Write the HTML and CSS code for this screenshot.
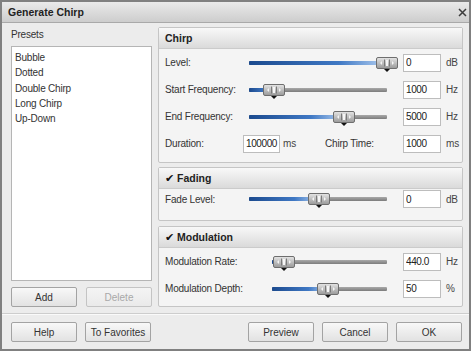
FILE: index.html
```html
<!DOCTYPE html>
<html lang="en">
<head>
    <meta charset="UTF-8">
    <meta name="viewport" content="width=device-width, initial-scale=1.0">
    <title>Generate Chirp</title>
    <link rel="stylesheet" href="styles.css">
</head>
<body>
    <div class="window">
        <div class="titlebar">
            <span class="title">Generate Chirp</span>
            <svg class="close" width="9" height="9" viewBox="0 0 9 9"><path d="M1 1L8 8M8 1L1 8" stroke="#3c3c3c" stroke-width="1.5"/></svg>
        </div>

        <div class="content">
            <!-- Presets column -->
            <div class="presets">
                <div class="presets-label">Presets</div>
                <ul class="preset-list">
                    <li>Bubble</li>
                    <li>Dotted</li>
                    <li>Double Chirp</li>
                    <li>Long Chirp</li>
                    <li>Up-Down</li>
                </ul>
                <div class="preset-buttons">
                    <button class="btn">Add</button>
                    <button class="btn" disabled>Delete</button>
                </div>
            </div>

            <!-- Settings panels -->
            <div class="panels">
                <div class="panel panel-chirp">
                    <div class="panel-header">Chirp</div>
                    <div class="panel-body">
                        <div class="row">
                            <span class="label">Level:</span>
                            <div class="slider">
                                <div class="track"><div class="fill" style="width:100%"></div></div>
                                <span class="thumb" style="left:100%"><svg width="20" height="10" viewBox="0 0 20 10"><path d="M5 3L3 5L5 7Z M15 3L17 5L15 7Z" fill="#f4f4f4"/><path d="M7.5 1.5V8.5M12.5 1.5V8.5" stroke="#7a7a7a"/><path d="M9.5 2V8M10.5 2V8" stroke="#f6f6f6"/></svg></span>
                            </div>
                            <input class="field" value="0"><span class="unit">dB</span>
                        </div>
                        <div class="row">
                            <span class="label">Start Frequency:</span>
                            <div class="slider">
                                <div class="track"><div class="fill" style="width:18%"></div></div>
                                <span class="thumb" style="left:18%"><svg width="20" height="10" viewBox="0 0 20 10"><path d="M5 3L3 5L5 7Z M15 3L17 5L15 7Z" fill="#f4f4f4"/><path d="M7.5 1.5V8.5M12.5 1.5V8.5" stroke="#7a7a7a"/><path d="M9.5 2V8M10.5 2V8" stroke="#f6f6f6"/></svg></span>
                            </div>
                            <input class="field" value="1000"><span class="unit">Hz</span>
                        </div>
                        <div class="row">
                            <span class="label">End Frequency:</span>
                            <div class="slider">
                                <div class="track"><div class="fill" style="width:69%"></div></div>
                                <span class="thumb" style="left:69%"><svg width="20" height="10" viewBox="0 0 20 10"><path d="M5 3L3 5L5 7Z M15 3L17 5L15 7Z" fill="#f4f4f4"/><path d="M7.5 1.5V8.5M12.5 1.5V8.5" stroke="#7a7a7a"/><path d="M9.5 2V8M10.5 2V8" stroke="#f6f6f6"/></svg></span>
                            </div>
                            <input class="field" value="5000"><span class="unit">Hz</span>
                        </div>
                        <div class="row">
                            <span class="label label-short">Duration:</span>
                            <input class="field field-inline" value="100000"><span class="unit unit-wide">ms</span>
                            <span class="label label-short">Chirp Time:</span>
                            <input class="field field-inline" value="1000"><span class="unit">ms</span>
                        </div>
                    </div>
                </div>

                <div class="panel panel-fading">
                    <div class="panel-header"><span class="check">✔</span>Fading</div>
                    <div class="panel-body">
                        <div class="row row-single">
                            <span class="label">Fade Level:</span>
                            <div class="slider">
                                <div class="track"><div class="fill" style="width:51%"></div></div>
                                <span class="thumb" style="left:51%"><svg width="20" height="10" viewBox="0 0 20 10"><path d="M5 3L3 5L5 7Z M15 3L17 5L15 7Z" fill="#f4f4f4"/><path d="M7.5 1.5V8.5M12.5 1.5V8.5" stroke="#7a7a7a"/><path d="M9.5 2V8M10.5 2V8" stroke="#f6f6f6"/></svg></span>
                            </div>
                            <input class="field" value="0"><span class="unit">dB</span>
                        </div>
                    </div>
                </div>

                <div class="panel panel-modulation">
                    <div class="panel-header"><span class="check">✔</span>Modulation</div>
                    <div class="panel-body">
                        <div class="row">
                            <span class="label label-wide">Modulation Rate:</span>
                            <div class="slider">
                                <div class="track"><div class="fill" style="width:10%"></div></div>
                                <span class="thumb" style="left:10%"><svg width="20" height="10" viewBox="0 0 20 10"><path d="M5 3L3 5L5 7Z M15 3L17 5L15 7Z" fill="#f4f4f4"/><path d="M7.5 1.5V8.5M12.5 1.5V8.5" stroke="#7a7a7a"/><path d="M9.5 2V8M10.5 2V8" stroke="#f6f6f6"/></svg></span>
                            </div>
                            <input class="field" value="440.0"><span class="unit">Hz</span>
                        </div>
                        <div class="row">
                            <span class="label label-wide">Modulation Depth:</span>
                            <div class="slider">
                                <div class="track"><div class="fill" style="width:49%"></div></div>
                                <span class="thumb" style="left:49%"><svg width="20" height="10" viewBox="0 0 20 10"><path d="M5 3L3 5L5 7Z M15 3L17 5L15 7Z" fill="#f4f4f4"/><path d="M7.5 1.5V8.5M12.5 1.5V8.5" stroke="#7a7a7a"/><path d="M9.5 2V8M10.5 2V8" stroke="#f6f6f6"/></svg></span>
                            </div>
                            <input class="field" value="50"><span class="unit">%</span>
                        </div>
                    </div>
                </div>
            </div>
        </div>

        <div class="footer">
            <button class="btn">Help</button>
            <button class="btn">To Favorites</button>
            <button class="btn btn-push">Preview</button>
            <button class="btn">Cancel</button>
            <button class="btn">OK</button>
        </div>
    </div>
</body>
</html>
```

FILE: styles.css
```css
body {
    margin: 0;
    background: #fff;
    font-family: "Liberation Sans", Arial, sans-serif;
    font-size: 10px;
    letter-spacing: -0.2px;
    color: #333;
}
.window {
    width: 471px;
    height: 351px;
    box-sizing: border-box;
    border: 2px solid #808080;
    background: #ececec;
    display: flex;
    flex-direction: column;
}
.titlebar {
    height: 20px;
    flex: none;
    display: flex;
    align-items: center;
    justify-content: space-between;
    padding: 0 2px 0 6px;
    background: linear-gradient(#eaeaea, #cdcdcd);
    border-bottom: 1px solid #a9a9a9;
}
.title {
    font-weight: bold;
    font-size: 10.5px;
    color: #222;
    letter-spacing: 0;
}
.content {
    flex: 1;
    display: flex;
    gap: 6px;
    padding: 4px 6px 6px 9px;
}
.presets {
    width: 141px;
    display: flex;
    flex-direction: column;
}
.presets-label {
    height: 19px;
    line-height: 16px;
}
.preset-list {
    list-style: none;
    margin: 0;
    padding: 3px;
    height: 235px;
    box-sizing: border-box;
    background: #fff;
    border: 1px solid #b5b5b5;
}
.preset-list li {
    line-height: 15.3px;
}
.preset-buttons {
    margin-top: 6px;
    display: flex;
    justify-content: space-between;
}
.btn {
    width: 66px;
    height: 20px;
    padding: 0;
    border: 1px solid #a3a3a3;
    border-radius: 2px;
    background: linear-gradient(#f8f8f8, #e2e2e2);
    font: inherit;
    color: #333;
}
.btn:disabled {
    color: #a8a8a8;
    border-color: #c4c4c4;
    background: linear-gradient(#f4f4f4, #eaeaea);
}
.panels {
    width: 305px;
    display: flex;
    flex-direction: column;
}
.panel {
    box-sizing: border-box;
    border: 1px solid #c5c5c5;
    border-radius: 2px;
    background: #f4f4f4;
}
.panel-chirp {
    height: 136px;
}
.panel-fading {
    height: 54px;
    margin-top: 4px;
}
.panel-modulation {
    height: 81px;
    margin-top: 5px;
}
.panel-header {
    height: 20px;
    line-height: 20px;
    padding-left: 6px;
    font-weight: bold;
    font-size: 10.5px;
    letter-spacing: 0;
    color: #222;
    background: linear-gradient(#f8f8f8, #dadada);
    border-bottom: 1px solid #cbcbcb;
}
.check {
    display: inline-block;
    width: 12px;
    font-family: "DejaVu Sans", sans-serif;
    font-size: 11px;
    font-weight: bold;
    color: #111;
}
.panel-body {
    padding-left: 6px;
}
.row {
    display: flex;
    align-items: center;
    height: 27px;
}
.row-single {
    height: 20px;
}
.label {
    width: 84px;
    flex: none;
}
.label-short {
    width: 78px;
}
.label-wide {
    width: 107px;
}
.slider {
    flex: 1;
    position: relative;
    height: 16px;
}
.track {
    position: absolute;
    left: 0;
    right: 0;
    top: 6px;
    height: 4px;
    border-radius: 1px;
    background: linear-gradient(#a9a9a9, #7c7c7c);
}
.fill {
    height: 100%;
    border-radius: 1px;
    background: linear-gradient(to right, #1b4a8e, #3f78c4 65%, #b4d0f2);
}
.thumb {
    position: absolute;
    top: 2px;
    width: 20px;
    height: 10px;
    margin-left: -11px;
    border: 1px solid #6e6e6e;
    border-radius: 2px;
    background: linear-gradient(#e2e2e2, #9c9c9c);
}
.thumb svg {
    display: block;
}
.thumb::after {
    content: "";
    position: absolute;
    left: 7px;
    bottom: -4px;
    border-left: 3px solid transparent;
    border-right: 3px solid transparent;
    border-top: 3px solid #111;
}
.field {
    width: 38px;
    height: 18px;
    box-sizing: border-box;
    margin: 0 0 0 16px;
    padding: 0 1px 0 2px;
    border: 1px solid #bdbdbd;
    background: #fff;
    font: inherit;
    letter-spacing: -0.4px;
    color: #222;
}
.field-inline {
    margin-left: 0;
    width: 37px;
}
.field-inline + .unit + .label + .field-inline {
    width: 38px;
}
.unit {
    width: 16px;
    margin-left: 5px;
    color: #444;
}
.unit-wide {
    width: 42px;
    margin-left: 3px;
}
.footer {
    height: 36px;
    flex: none;
    box-sizing: border-box;
    display: flex;
    gap: 8px;
    padding: 8px 7px 0 9px;
    border-top: 1px solid #cdcdcd;
    box-shadow: inset 0 1px #fafafa;
}
.btn-push {
    margin-left: auto;
}
```
